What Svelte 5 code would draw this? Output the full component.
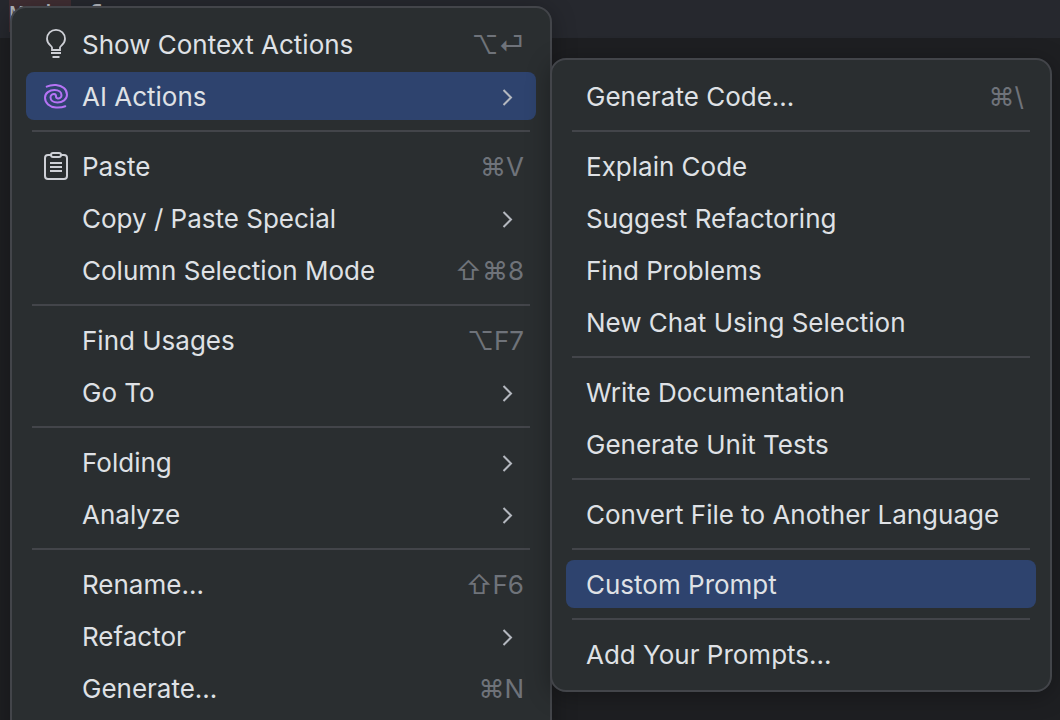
<script>
  /**
   * Editor context menu with the "AI Actions" submenu expanded.
   * An item without a label is drawn as a separator.
   */
  const mainItems = [
    { label: 'Show Context Actions', icon: 'bulb', shortcut: '⌥⏎' },
    { label: 'AI Actions', icon: 'ai', submenu: true },
    {},
    { label: 'Paste', icon: 'paste', shortcut: '⌘V' },
    { label: 'Copy / Paste Special', submenu: true },
    { label: 'Column Selection Mode', shortcut: '⇧⌘8' },
    {},
    { label: 'Find Usages', shortcut: '⌥F7' },
    { label: 'Go To', submenu: true },
    {},
    { label: 'Folding', submenu: true },
    { label: 'Analyze', submenu: true },
    {},
    { label: 'Rename...', shortcut: '⇧F6' },
    { label: 'Refactor', submenu: true },
    { label: 'Generate...', shortcut: '⌘N' },
  ];

  const aiItems = [
    { label: 'Generate Code...', shortcut: '⌘\\' },
    {},
    { label: 'Explain Code' },
    { label: 'Suggest Refactoring' },
    { label: 'Find Problems' },
    { label: 'New Chat Using Selection' },
    {},
    { label: 'Write Documentation' },
    { label: 'Generate Unit Tests' },
    {},
    { label: 'Convert File to Another Language' },
    {},
    { label: 'Custom Prompt' },
    {},
    { label: 'Add Your Prompts...' },
  ];

  let openItem = $state('AI Actions');
  let activeItem = $state('Custom Prompt');
</script>

{#snippet icon(name)}
  <svg class="icon" viewBox="0 0 32 32" fill="none" stroke="currentColor" stroke-width="2" aria-hidden="true">
    {#if name === 'bulb'}
      <path d="M12 22V19.500C12 17.800 7 16.500 7 10.800a9 9 0 0 1 18 0C25 16.500 20 17.800 20 19.500V22z" stroke-width="1.800" />
      <path d="M11 25h10M12.500 29h7" />
    {:else if name === 'ai'}
      <g stroke="#b573f5" stroke-width="2" stroke-linecap="round">
        <path d="M6.700 6.600C10 5 13 4.800 16 5C22.500 5.500 27 9.500 27 14.800C27 19.500 22.500 22.400 17.500 22.400C13 22.400 10.500 20 10.500 17.400C10.500 15 12.500 13.800 14.200 14C15.500 14.200 16 15 16 16.200" />
        <path d="M25.300 26.200C22 27.500 19 27.600 16 27.400C9.500 27 5 23 5 17.700C5 13 9.500 10 14.500 10C19 10 21.500 12.500 21.500 15.200C21.500 17.600 19.500 18.600 17.800 18.400C16.500 18.200 16 17.400 16 16.200" />
      </g>
    {:else}
      <rect x="5" y="5" width="22" height="24" rx="3" />
      <rect class="clip" x="11" y="3" width="10" height="4" rx="2" />
      <path d="M10 13h12M10 17h12M10 21h12" />
    {/if}
  </svg>
{/snippet}

{#snippet entry(item, highlighted, select)}
  {#if item.label}
    <li role="none">
      <button
        class="item"
        class:highlighted
        role="menuitem"
        aria-haspopup={item.submenu ? 'menu' : undefined}
        onclick={() => select(item.label)}
      >
        {#if item.icon}
          {@render icon(item.icon)}
        {/if}
        <span class="label">{item.label}</span>
        {#if item.shortcut}
          <kbd>{item.shortcut}</kbd>
        {/if}
        {#if item.submenu}
          <svg class="chevron" viewBox="0 0 12 18" aria-hidden="true">
            <path d="M1.500 2l7.500 7.500L1.500 17" fill="none" stroke="currentColor" stroke-width="2" />
          </svg>
        {/if}
      </button>
    </li>
  {:else}
    <li class="separator" role="separator"></li>
  {/if}
{/snippet}

<main class="editor">
  <code class="code-line"><span class="changed">Main</span> f</code>

  <div class="menus">
    <ul class="menu main-menu" role="menu" aria-label="Context menu">
      {#each mainItems as item}
        {@render entry(item, item.label === openItem, (label) => (openItem = label))}
      {/each}
    </ul>

    <ul class="menu sub-menu" role="menu" aria-label="AI Actions">
      {#each aiItems as item}
        {@render entry(item, item.label === activeItem, (label) => (activeItem = label))}
      {/each}
    </ul>
  </div>
</main>

<style>
  :global(body) {
    margin: 0;
    background: #1e1f22;
  }

  .editor {
    position: relative;
    height: 100vh;
    overflow: hidden;
    background: #1e1f22;
    font-family: Inter, 'Liberation Sans', sans-serif;
    font-size: 26px;
    line-height: 32px;
    color: #dfe1e5;
  }

  .code-line {
    display: block;
    height: 38px;
    padding-left: 9px;
    background: #26282e;
    color: #b4b8bf;
    font-family: 'Liberation Mono', monospace;
    white-space: pre;
  }

  .changed {
    display: inline-block;
    background: #402e33;
  }

  /* Popups float over the editor */
  .menus {
    position: absolute;
    inset: 6px 8px 0 10px;
    display: grid;
    grid-template-columns: 540fr 502fr;
    align-items: start;
  }

  .menu {
    box-sizing: border-box;
    margin: 0;
    padding: 10px 14px;
    list-style: none;
    background: #2a2e30;
    border: 2px solid #43454a;
    border-radius: 16px;
    box-shadow: 0 4px 24px rgba(0, 0, 0, 0.3);
  }

  .main-menu {
    min-height: 110vh;
    margin-right: -2px;
  }

  .main-menu .item {
    padding-left: 56px;
  }

  .sub-menu {
    position: relative;
    margin-top: 52px;
  }

  .item {
    position: relative;
    display: flex;
    align-items: center;
    width: 100%;
    height: 48px;
    margin: 2px 0;
    padding: 2px 12px 0 20px;
    border: 0;
    border-radius: 8px;
    background: none;
    color: inherit;
    font: inherit;
    text-align: left;
    white-space: nowrap;
  }

  li:not(.separator) {
    display: flow-root;
  }

  .highlighted {
    background: #2e436e;
  }

  .label {
    flex: 1;
  }

  .icon {
    position: absolute;
    top: 8px;
    left: 14px;
    width: 32px;
    height: 32px;
    color: #ced0d6;
  }

  .clip {
    fill: #2a2e30;
  }

  kbd {
    font: inherit;
    color: #6f737a;
  }

  .chevron {
    width: 12px;
    height: 18px;
    margin-right: 10px;
    color: #b4b8bf;
  }

  .separator {
    height: 2px;
    margin: 8px 6px;
    background: #43454a;
  }
</style>
